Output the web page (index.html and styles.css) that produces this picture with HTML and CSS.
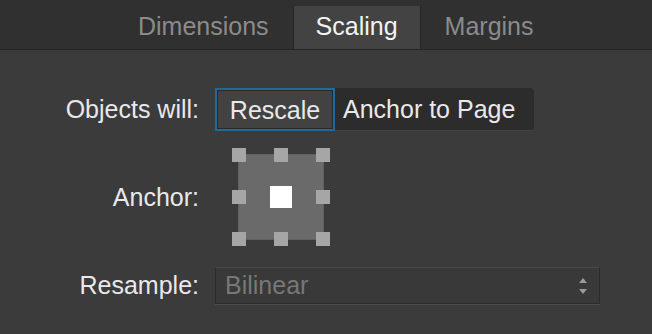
FILE: index.html
```html
<!DOCTYPE html>
<html>
<head>
<meta charset="utf-8">
<link rel="stylesheet" href="styles.css">
</head>
<body>
<div class="panel">
  <div class="tabs">
    <div class="tab">Dimensions</div>
    <div class="tab active">Scaling</div>
    <div class="tab">Margins</div>
  </div>
  <div class="form">
    <div class="row row-objects">
      <div class="label">Objects will:</div>
      <div class="segmented">
        <div class="seg seg-on">Rescale</div>
        <div class="seg seg-off">Anchor to Page</div>
      </div>
    </div>
    <div class="row row-anchor">
      <div class="label">Anchor:</div>
      <div class="anchor">
        <div class="anchor-box"></div>
        <div class="handle h-tl"></div>
        <div class="handle h-tc"></div>
        <div class="handle h-tr"></div>
        <div class="handle h-ml"></div>
        <div class="handle h-mr"></div>
        <div class="handle h-bl"></div>
        <div class="handle h-bc"></div>
        <div class="handle h-br"></div>
        <div class="anchor-point"></div>
      </div>
    </div>
    <div class="row row-resample">
      <div class="label">Resample:</div>
      <div class="select">
        <span class="select-value">Bilinear</span>
        <svg class="updown" width="10" height="18" viewBox="0 0 10 18">
          <path d="M5 1 L9 6 L1 6 Z" fill="#9a9a9a"/>
          <path d="M1 12 L9 12 L5 17 Z" fill="#9a9a9a"/>
        </svg>
      </div>
    </div>
  </div>
</div>
</body>
</html>
```

FILE: styles.css
```css
html, body {
  margin: 0;
  padding: 0;
  background: #3b3b3b;
}
body {
  width: 652px;
  height: 334px;
  overflow: hidden;
  font-family: "Liberation Sans", Arial, sans-serif;
  font-size: 25px;
  color: #e9e9e9;
}
.tabs {
  display: flex;
  height: 49px;
  background: #303030;
  border-bottom: 1px solid #242424;
  padding-left: 114px;
  box-sizing: content-box;
}
.tab {
  height: 43px;
  margin-top: 6px;
  padding: 0 24px 3px;
  box-sizing: border-box;
  display: flex;
  align-items: center;
  color: #8b8b8b;
}
.tab.active {
  background: #434343;
  color: #f2f2f2;
  padding: 0 0 3px;
  border-left: 1px solid #262626;
  border-right: 1px solid #262626;
  width: 128px;
  justify-content: center;
}
.form {
  padding-top: 38px;
  display: flex;
  flex-direction: column;
}
.row {
  display: flex;
  align-items: center;
}
.label {
  text-align: right;
  padding-right: 16px;
  box-sizing: border-box;
  flex: none;
  width: 215px;
}
.segmented {
  display: flex;
  height: 43px;
}
.seg {
  display: flex;
  align-items: center;
  box-sizing: border-box;
  height: 43px;
  padding-top: 1px;
}
.seg-on {
  width: 120px;
  justify-content: center;
  background: #424242;
  border: 2px solid #1f6a9c;
  box-shadow: inset 0 0 0 1px #2a2a2a;
}
.seg-off {
  width: 199px;
  padding-left: 8px;
  background: #2c2c2c;
  border-radius: 0 4px 4px 0;
  border-bottom: 1px solid #444;
}
.row-anchor {
  margin-top: 17px;
}
.anchor {
  position: relative;
  width: 98px;
  height: 98px;
  margin-left: 17px;
}
.anchor-box {
  position: absolute;
  left: 7px;
  top: 7px;
  width: 84px;
  height: 84px;
  background: #6a6a6a;
  box-shadow: 0 0 0 1px #616161;
}
.handle {
  position: absolute;
  width: 14px;
  height: 14px;
  background: #a6a6a6;
}
.h-tl { left: 0; top: 0; }
.h-tc { left: 42px; top: 0; }
.h-tr { left: 84px; top: 0; }
.h-ml { left: 0; top: 42px; }
.h-mr { left: 84px; top: 42px; }
.h-bl { left: 0; top: 84px; }
.h-bc { left: 42px; top: 84px; }
.h-br { left: 84px; top: 84px; }
.anchor-point {
  position: absolute;
  left: 38px;
  top: 38px;
  width: 22px;
  height: 22px;
  background: #ffffff;
}
.row-resample {
  margin-top: 21px;
}
.select {
  width: 385px;
  height: 37px;
  box-sizing: border-box;
  background: #393939;
  border: 1px solid #2b2b2b;
  border-top-color: #4a4a4a;
  box-shadow: 0 1px 0 #4c4c4c;
  display: flex;
  align-items: center;
  justify-content: space-between;
  padding: 0 11px 0 9px;
}
.select-value {
  color: #777777;
}
.updown {
  display: block;
}
```
